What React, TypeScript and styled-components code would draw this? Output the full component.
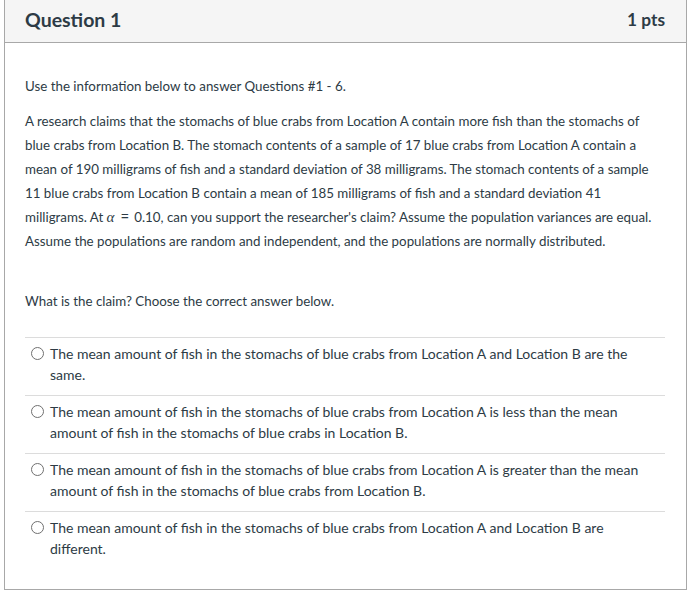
import React from "react";
import styled, { createGlobalStyle } from "styled-components";

const Global = createGlobalStyle`
  html, body { margin: 0; padding: 0; background: #ffffff; }
  body { font-family: Lato, "Open Sans", sans-serif; color: #2d3b45; }
`;

const Card = styled.div`
  margin: -1px 0 0 4px;
  width: 683px;
  box-sizing: border-box;
  border: 1px solid #a8a8a8;
  background: #fff;
`;

const Header = styled.div`
  height: 43px;
  box-sizing: border-box;
  background: #f5f5f5;
  border-bottom: 1px solid #a8a8a8;
  display: flex;
  align-items: center;
  justify-content: space-between;
  padding: 0 21px 3px 20px;
`;

const Title = styled.div`
  font-size: 19.5px;
  font-weight: 700;
  color: #2d3b45;
`;

const Points = styled.div`
  font-size: 17.3px;
  font-weight: 700;
  color: #2d3b45;
`;

const Body = styled.div`
  padding: 31px 21px 30px 20px;
  font-size: 13.33px;
`;

const Para = styled.p<{ $mb?: number }>`
  margin: 0 0 ${(p) => p.$mb ?? 0}px 0;
  line-height: 24px;
`;

const Alpha = styled.span`
  font-family: "Liberation Serif", "DejaVu Serif", serif;
  font-style: italic;
  font-size: 15px;
  line-height: 1;
  margin-right: 6px;
`;

const Eq = styled.span`
  font-size: 15px;
  line-height: 1;
  margin-right: 5px;
`;

const Options = styled.div`
  margin-top: 24px;
  border-top: 1px solid #dcdcdc;
`;

const Option = styled.label<{ $last?: boolean }>`
  display: flex;
  align-items: flex-start;
  gap: 6px;
  padding: 5px 0 ${(p) => (p.$last ? 0 : 10)}px 6px;
  border-bottom: ${(p) => (p.$last ? "none" : "1px solid #dcdcdc")};
  line-height: 21px;
  font-size: 14px;
`;

const Radio = styled.span`
  flex: none;
  width: 11px;
  height: 11px;
  border: 1px solid #707070;
  border-radius: 50%;
  margin-top: 4px;
  background: #fff;
`;

const OptText = styled.span`
  flex: 1;
  padding-right: 16px;
`;

const options = [
  "The mean amount of fish in the stomachs of blue crabs from Location A and Location B are the same.",
  "The mean amount of fish in the stomachs of blue crabs from Location A is less than the mean amount of fish in the stomachs of blue crabs in Location B.",
  "The mean amount of fish in the stomachs of blue crabs from Location A is greater than the mean amount of fish in the stomachs of blue crabs from Location B.",
  "The mean amount of fish in the stomachs of blue crabs from Location A and Location B are different.",
];

export default function App() {
  return (
    <>
      <Global />
      <Card>
        <Header>
          <Title>Question 1</Title>
          <Points>1 pts</Points>
        </Header>
        <Body>
          <Para $mb={11}>Use the information below to answer Questions #1 - 6.</Para>
          <Para $mb={36}>
            A research claims that the stomachs of blue crabs from Location A contain more fish than the stomachs of
            blue crabs from Location B. The stomach contents of a sample of 17 blue crabs from Location A contain a
            mean of 190 milligrams of fish and a standard deviation of 38 milligrams. The stomach contents of a sample
            11 blue crabs from Location B contain a mean of 185 milligrams of fish and a standard deviation 41
            milligrams. At <Alpha>α</Alpha>
            <Eq>=</Eq>0.10, can you support the researcher's claim? Assume the population variances are equal. Assume
            the populations are random and independent, and the populations are normally distributed.
          </Para>
          <Para>What is the claim? Choose the correct answer below.</Para>
          <Options>
            {options.map((o, i) => (
              <Option key={i} $last={i === options.length - 1}>
                <Radio />
                <OptText>{o}</OptText>
              </Option>
            ))}
          </Options>
        </Body>
      </Card>
    </>
  );
}
